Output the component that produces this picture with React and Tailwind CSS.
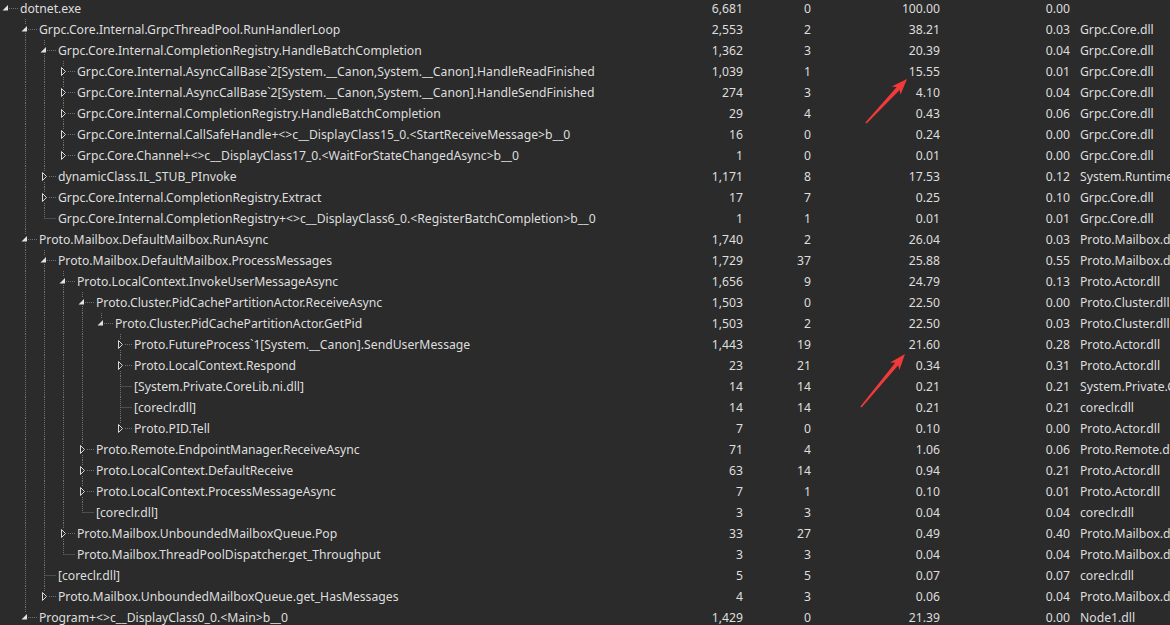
import React from "react";

// level, name, state (e = expanded, c = collapsed, l = leaf), inclusive, exclusive, incl %, excl %, module
const rows = [
  [0, "dotnet.exe", "e", "6,681", "0", "100.00", "0.00", ""],
  [1, "Grpc.Core.Internal.GrpcThreadPool.RunHandlerLoop", "e", "2,553", "2", "38.21", "0.03", "Grpc.Core.dll"],
  [2, "Grpc.Core.Internal.CompletionRegistry.HandleBatchCompletion", "e", "1,362", "3", "20.39", "0.04", "Grpc.Core.dll"],
  [3, "Grpc.Core.Internal.AsyncCallBase`2[System.__Canon,System.__Canon].HandleReadFinished", "c", "1,039", "1", "15.55", "0.01", "Grpc.Core.dll"],
  [3, "Grpc.Core.Internal.AsyncCallBase`2[System.__Canon,System.__Canon].HandleSendFinished", "c", "274", "3", "4.10", "0.04", "Grpc.Core.dll"],
  [3, "Grpc.Core.Internal.CompletionRegistry.HandleBatchCompletion", "c", "29", "4", "0.43", "0.06", "Grpc.Core.dll"],
  [3, "Grpc.Core.Internal.CallSafeHandle+<>c__DisplayClass15_0.<StartReceiveMessage>b__0", "c", "16", "0", "0.24", "0.00", "Grpc.Core.dll"],
  [3, "Grpc.Core.Channel+<>c__DisplayClass17_0.<WaitForStateChangedAsync>b__0", "c", "1", "0", "0.01", "0.00", "Grpc.Core.dll"],
  [2, "dynamicClass.IL_STUB_PInvoke", "c", "1,171", "8", "17.53", "0.12", "System.Runtime.dll"],
  [2, "Grpc.Core.Internal.CompletionRegistry.Extract", "c", "17", "7", "0.25", "0.10", "Grpc.Core.dll"],
  [2, "Grpc.Core.Internal.CompletionRegistry+<>c__DisplayClass6_0.<RegisterBatchCompletion>b__0", "l", "1", "1", "0.01", "0.01", "Grpc.Core.dll"],
  [1, "Proto.Mailbox.DefaultMailbox.RunAsync", "e", "1,740", "2", "26.04", "0.03", "Proto.Mailbox.dll"],
  [2, "Proto.Mailbox.DefaultMailbox.ProcessMessages", "e", "1,729", "37", "25.88", "0.55", "Proto.Mailbox.dll"],
  [3, "Proto.LocalContext.InvokeUserMessageAsync", "e", "1,656", "9", "24.79", "0.13", "Proto.Actor.dll"],
  [4, "Proto.Cluster.PidCachePartitionActor.ReceiveAsync", "e", "1,503", "0", "22.50", "0.00", "Proto.Cluster.dll"],
  [5, "Proto.Cluster.PidCachePartitionActor.GetPid", "e", "1,503", "2", "22.50", "0.03", "Proto.Cluster.dll"],
  [6, "Proto.FutureProcess`1[System.__Canon].SendUserMessage", "c", "1,443", "19", "21.60", "0.28", "Proto.Actor.dll"],
  [6, "Proto.LocalContext.Respond", "c", "23", "21", "0.34", "0.31", "Proto.Actor.dll"],
  [6, "[System.Private.CoreLib.ni.dll]", "l", "14", "14", "0.21", "0.21", "System.Private.CoreLib.dll"],
  [6, "[coreclr.dll]", "l", "14", "14", "0.21", "0.21", "coreclr.dll"],
  [6, "Proto.PID.Tell", "c", "7", "0", "0.10", "0.00", "Proto.Actor.dll"],
  [4, "Proto.Remote.EndpointManager.ReceiveAsync", "c", "71", "4", "1.06", "0.06", "Proto.Remote.dll"],
  [4, "Proto.LocalContext.DefaultReceive", "c", "63", "14", "0.94", "0.21", "Proto.Actor.dll"],
  [4, "Proto.LocalContext.ProcessMessageAsync", "c", "7", "1", "0.10", "0.01", "Proto.Actor.dll"],
  [4, "[coreclr.dll]", "l", "3", "3", "0.04", "0.04", "coreclr.dll"],
  [3, "Proto.Mailbox.UnboundedMailboxQueue.Pop", "c", "33", "27", "0.49", "0.40", "Proto.Mailbox.dll"],
  [3, "Proto.Mailbox.ThreadPoolDispatcher.get_Throughput", "l", "3", "3", "0.04", "0.04", "Proto.Mailbox.dll"],
  [2, "[coreclr.dll]", "l", "5", "5", "0.07", "0.07", "coreclr.dll"],
  [2, "Proto.Mailbox.UnboundedMailboxQueue.get_HasMessages", "c", "4", "3", "0.06", "0.04", "Proto.Mailbox.dll"],
  [1, "Program+<>c__DisplayClass0_0.<Main>b__0", "e", "1,429", "0", "21.39", "0.00", "Node1.dll"],
];

// does the row at index i have a later sibling?
const hasNext = rows.map((r, i) => {
  for (let j = i + 1; j < rows.length; j++) {
    if (rows[j][0] < r[0]) return false;
    if (rows[j][0] === r[0]) return true;
  }
  return false;
});

// for each row, which ancestor levels still continue below
const continues = rows.map((r, i) => {
  const out = {};
  for (let k = 1; k < r[0]; k++) {
    for (let j = i - 1; j >= 0; j--) {
      if (rows[j][0] === k) {
        out[k] = hasNext[j];
        break;
      }
    }
  }
  return out;
});

const LINE = "#707070";

const Guides = ({ level, state, next, cont }) => {
  const x0 = 19 * level;
  const w = 20 + 19 * level;
  return (
    <svg width={w} height="21" className="shrink-0">
      {Array.from({ length: Math.max(level - 1, 0) }, (_, n) => n + 1).map((k) =>
        cont[k] ? (
          <line key={k} x1={6.5 + 19 * k} y1="0" x2={6.5 + 19 * k} y2="21" stroke={LINE} strokeDasharray="1 1" />
        ) : null
      )}
      {level > 0 && (
        <line x1={x0 + 6.5} y1="0" x2={x0 + 6.5} y2={next ? 21 : 10.5} stroke={LINE} strokeDasharray="1 1" />
      )}
      <line
        x1={state === "l" ? x0 + 6.5 : x0 + 9}
        y1="10.5"
        x2={x0 + 18}
        y2="10.5"
        stroke={LINE}
        strokeDasharray="1 1"
      />
      {state === "e" && (
        <>
          <rect x={x0 + 2} y="5" width="7" height="9" fill="#2b2b2b" />
          <polygon points={`${x0 + 8},7 ${x0 + 8},12.5 ${x0 + 2.5},12.5`} fill="#e2e2e2" />
        </>
      )}
      {state === "c" && (
        <>
          <rect x={x0 + 3} y="5" width="7" height="11" fill="#2b2b2b" />
          <polygon
            points={`${x0 + 4.5},6.5 ${x0 + 8.5},10.5 ${x0 + 4.5},14.5`}
            fill="#2b2b2b"
            stroke="#d8d8d8"
            strokeWidth="1"
          />
        </>
      )}
    </svg>
  );
};

const Arrows = () => (
  <svg className="absolute inset-0 pointer-events-none" width="1170" height="625" viewBox="0 0 1170 625">
    <polygon
      points="907,79 900.5,94.8 899.7,89.9 866.6,123.5 865.4,122.5 896.7,87.1 891.7,86.6"
      fill="#f23a3a"
    />
    <polygon
      points="905,354 899.4,370.1 898.2,365.3 861.6,407.5 860.4,406.5 895.2,362.7 890.2,362.5"
      fill="#f23a3a"
    />
  </svg>
);

export default function App() {
  return (
    <div
      className="relative w-[1170px] h-[625px] overflow-hidden bg-[#2b2b2b] text-[#dedede] text-[12.2px]"
      style={{ fontFamily: '"Noto Sans", "Noto Sans CJK SC", sans-serif' }}
    >
      <div className="-mt-[2px] flex flex-col">
        {rows.map((r, i) => {
          const [level, name, state, c1, c2, c3, c4, mod] = r;
          return (
            <div key={i} className="flex h-[21px] items-center leading-[21px] whitespace-nowrap">
              <div className="flex w-[680px] shrink-0 items-center overflow-hidden">
                <Guides level={level} state={state} next={hasNext[i]} cont={continues[i]} />
                <span>{name}</span>
              </div>
              <div className="w-[63px] shrink-0 text-right">{c1}</div>
              <div className="w-[68px] shrink-0 text-right">{c2}</div>
              <div className="w-[129px] shrink-0 text-right">{c3}</div>
              <div className="w-[130px] shrink-0 text-right">{c4}</div>
              <div className="flex-1 overflow-hidden pl-[10px]">{mod}</div>
            </div>
          );
        })}
      </div>
      <Arrows />
    </div>
  );
}
